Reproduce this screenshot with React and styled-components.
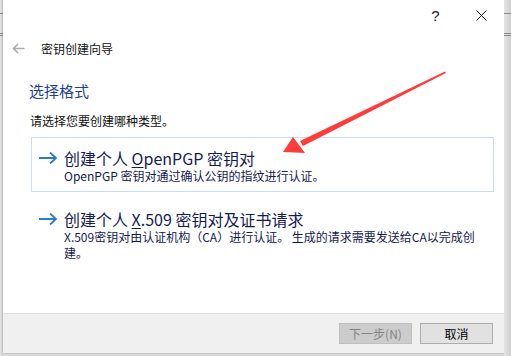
import React from 'react'
import styled, { createGlobalStyle } from 'styled-components'

const GlobalStyle = createGlobalStyle`
  html, body {
    margin: 0;
    padding: 0;
    background: #dcdcdc;
  }
  body {
    font-family: "Noto Sans CJK SC", "Noto Sans", sans-serif;
    overflow: hidden;
  }
`

const Page = styled.div`
  position: relative;
  width: 511px;
  height: 356px;
  display: flex;
  background: #d9d9d9;
  overflow: hidden;
`

const SideStrip = styled.div`
  width: ${p => p.$w}px;
  flex: none;
  height: 100%;
  background:
    linear-gradient(#8a8a8a, #8a8a8a) 0 13px / 100% 1px no-repeat,
    linear-gradient(#8a8a8a, #8a8a8a) 0 33px / 100% 1px no-repeat,
    linear-gradient(#8a8a8a, #8a8a8a) 0 35px / 100% 1px no-repeat,
    linear-gradient(90deg, #e4e4e4, #cfcfcf);
`

const Dialog = styled.div`
  width: 501px;
  height: 353px;
  flex: none;
  background: #fff;
  display: flex;
  flex-direction: column;
  box-shadow: 0 0 2px rgba(0, 0, 0, 0.25);
`

const TitleBar = styled.div`
  height: 30px;
  display: flex;
  justify-content: flex-end;
`

const CaptionButton = styled.div`
  width: ${p => p.$w}px;
  height: 30px;
  display: flex;
  align-items: center;
  justify-content: center;
  font-family: "Liberation Sans", sans-serif;
  font-size: 15px;
  color: #222;
`

const Header = styled.div`
  height: 36px;
  display: flex;
  align-items: center;
  padding-left: 9px;
  gap: 16px;
  font-size: 12px;
  color: #111;
`

const Content = styled.div`
  padding: 0 10px 0 26px;
  display: flex;
  flex-direction: column;
`

const Heading = styled.div`
  margin-top: 15px;
  font-size: 15px;
  line-height: 20px;
  color: #1d3f95;
`

const Instruction = styled.div`
  margin-top: 12px;
  margin-left: 1px;
  font-size: 12px;
  line-height: 16px;
  color: #111;
`

const LinkCard = styled.div`
  margin-left: 2px;
  margin-top: ${p => p.$mt}px;
  border: 1px solid ${p => (p.$focused ? '#c7def2' : 'transparent')};
  padding: 10px 8px 7px 6px;
  display: flex;
  gap: 6px;
`

const ArrowBox = styled.div`
  width: 20px;
  height: 20px;
  flex: none;
  display: flex;
  align-items: center;
`

const LinkText = styled.div`
  display: flex;
  flex-direction: column;
  color: #151c55;
`

const LinkTitle = styled.div`
  font-size: 16px;
  line-height: 20px;
  white-space: nowrap;
`

const LinkNote = styled.div`
  font-size: 12px;
  line-height: 16px;
  width: ${p => p.$w || 'auto'};
  color: #131a50;
`

const Key = styled.span`
  text-decoration: underline;
  text-underline-offset: 2px;
`

const Footer = styled.div`
  margin-top: auto;
  height: 40px;
  border-top: 1px solid #dfdfdf;
  background: #f0f0f0;
  display: flex;
  justify-content: flex-end;
  align-items: flex-start;
  padding: 9px 11px 0 0;
  gap: 8px;
  box-sizing: border-box;
`

const Button = styled.div`
  width: 73px;
  height: 21px;
  box-sizing: border-box;
  border: 1px solid ${p => (p.$disabled ? '#bfbfbf' : '#adadad')};
  background: ${p => (p.$disabled ? '#cccccc' : '#e1e1e1')};
  color: ${p => (p.$disabled ? '#838383' : '#000')};
  font-size: 12px;
  display: flex;
  align-items: center;
  justify-content: center;
`

const Overlay = styled.svg`
  position: absolute;
  left: 0;
  top: 0;
  pointer-events: none;
`

const BlueArrow = () => (
  <svg width="20" height="14" viewBox="0 0 20 14">
    <path d="M1 7h17M12 1.5l6 5.5-6 5.5" fill="none" stroke="#2a7bd0" strokeWidth="1.8" />
  </svg>
)

export default function App() {
  return (
    <>
      <GlobalStyle />
      <Page>
        <SideStrip $w={3} />
        <Dialog>
          <TitleBar>
            <CaptionButton $w={45}>?</CaptionButton>
            <CaptionButton $w={46}>
              <svg width="11" height="11" viewBox="0 0 11 11">
                <path d="M0.5 0.5l10 10M10.5 0.5l-10 10" stroke="#222" strokeWidth="1" />
              </svg>
            </CaptionButton>
          </TitleBar>
          <Header>
            <svg width="13" height="11" viewBox="0 0 13 11">
              <path d="M12.5 5.5H1.5M6 1L1.5 5.5 6 10" fill="none" stroke="#ababab" strokeWidth="1.6" />
            </svg>
            <span>密钥创建向导</span>
          </Header>
          <Content>
            <Heading>选择格式</Heading>
            <Instruction>请选择您要创建哪种类型。</Instruction>
            <LinkCard $focused $mt={8}>
              <ArrowBox><BlueArrow /></ArrowBox>
              <LinkText>
                <LinkTitle>创建个人 <Key>O</Key>penPGP 密钥对</LinkTitle>
                <LinkNote>OpenPGP 密钥对通过确认公钥的指纹进行认证。</LinkNote>
              </LinkText>
            </LinkCard>
            <LinkCard $mt={6}>
              <ArrowBox><BlueArrow /></ArrowBox>
              <LinkText>
                <LinkTitle>创建个人 <Key>X</Key>.509 密钥对及证书请求</LinkTitle>
                <LinkNote $w="414px">X.509密钥对由认证机构（CA）进行认证。 生成的请求需要发送给CA以完成创建。</LinkNote>
              </LinkText>
            </LinkCard>
          </Content>
          <Footer>
            <Button $disabled>下一步(N)</Button>
            <Button>取消</Button>
          </Footer>
        </Dialog>
        <SideStrip $w={7} />
        <Overlay width="511" height="356" viewBox="0 0 511 356">
          <path d="M445 71.5 L446 73 L303 146 L300 141 Z" fill="#ff3b3b" />
          <path d="M283 152 L293 137 L305 153 Z" fill="#ff3b3b" />
        </Overlay>
      </Page>
    </>
  )
}
